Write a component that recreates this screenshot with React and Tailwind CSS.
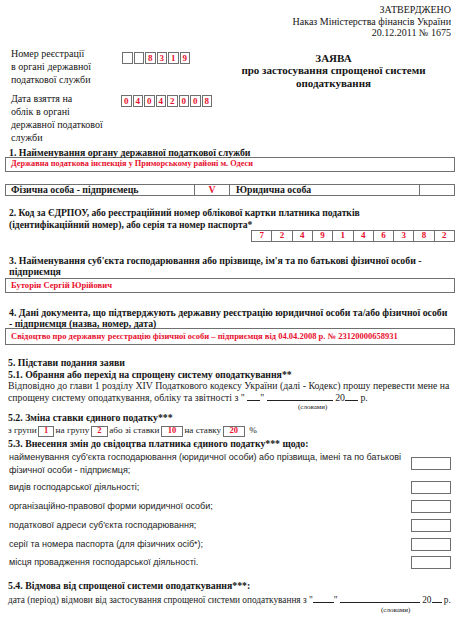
import React from "react";

const red = "text-[#e8102e]";

function DigitBoxes({ values }) {
  return (
    <div className="flex gap-[1px]">
      {values.map((v, i) => (
        <div
          key={i}
          className={`w-[10.5px] h-[12px] border border-[#6f6f6f] flex items-center justify-center text-[9px] font-bold leading-none ${red}`}
        >
          {v}
        </div>
      ))}
    </div>
  );
}

function Blank({ w, thick }) {
  return (
    <span
      className={`inline-block align-baseline ${w} ${thick ? "border-b-[1.5px]" : "border-b"} border-[#222] h-[8px]`}
    />
  );
}

function ItemRow({ children, h }) {
  return (
    <div className={`flex items-center justify-between ${h}`}>
      <div className="[font-family:'Liberation_Sans',sans-serif] text-[9px] leading-[13px] text-[#222] w-[395px]">
        {children}
      </div>
      <div className="w-[40px] h-[13px] border border-[#6f6f6f] mr-[4px] shrink-0" />
    </div>
  );
}

function NumBox({ w, children }) {
  return (
    <span className={`mx-[1.5px] ${w} h-[11px] border border-[#6f6f6f] flex items-center justify-center font-bold text-[8.5px] ${red}`}>
      {children}
    </span>
  );
}

export default function App() {
  const code = ["7", "2", "4", "9", "1", "4", "6", "3", "8", "2"];
  return (
    <div className="w-[474px] h-[618px] overflow-hidden bg-white text-[#151515] [font-family:'Liberation_Serif',serif] pl-[9px] pr-[19px]">
      {/* Header */}
      <div className="pt-[4px] pr-[4px] text-right text-[10px] leading-[11.5px]">
        <div>ЗАТВЕРДЖЕНО</div>
        <div>Наказ Міністерства фінансів України</div>
        <div>20.12.2011 № 1675</div>
      </div>

      {/* Top block */}
      <div className="flex mt-[8px]">
        <div className="w-[203px] shrink-0">
          <div className="flex">
            <div className="w-[113px] pl-[2px] text-[10px] leading-[13px]">
              <div>Номер реєстрації</div>
              <div>в органі державної</div>
              <div>податкової служби</div>
            </div>
            <div className="mt-[5.5px]">
              <DigitBoxes values={["", "", "8", "3", "1", "9"]} />
            </div>
          </div>
          <div className="flex mt-[6px]">
            <div className="w-[113px] pl-[2px] text-[10px] leading-[13px]">
              <div>Дата взяття на</div>
              <div>облік в органі</div>
              <div>державної податкової</div>
              <div>служби</div>
            </div>
            <div className="mt-[3.5px]">
              <DigitBoxes values={["0", "4", "0", "4", "2", "0", "0", "8"]} />
            </div>
          </div>
        </div>
        <div className="flex-1 text-center font-bold text-[11px] leading-[12.5px] pt-[5px]">
          <div>ЗАЯВА</div>
          <div>про застосування спрощеної системи</div>
          <div>оподаткування</div>
        </div>
      </div>

      {/* Section 1 */}
      <div className="mt-[4.5px] font-bold text-[9.8px] leading-[10px] whitespace-nowrap">
        1. Найменування органу державної податкової служби
      </div>
      <div className={`-ml-[4px] mt-[-1px] h-[15px] border border-[#707070] pl-[5px] flex items-center font-bold text-[8.3px] ${red}`}>
        Державна податкова інспекція у Приморському районі м. Одеси
      </div>

      {/* Person type row */}
      <div className="-ml-[4px] mt-[12px] h-[12px] flex border border-[#707070] font-bold text-[9.8px]">
        <div className="w-[189px] pl-[5px] flex items-center border-r border-[#707070]">
          Фізична особа - підприємець
        </div>
        <div className={`w-[35px] flex items-center justify-center border-r border-[#707070] ${red}`}>
          V
        </div>
        <div className="w-[190px] pl-[6px] flex items-center border-r border-[#707070]">
          Юридична особа
        </div>
        <div className="flex-1" />
      </div>

      {/* Section 2 */}
      <div className="mt-[11px] font-bold text-[9.6px] leading-[12px] whitespace-nowrap">
        <div>2. Код за ЄДРПОУ, або реєстраційний номер облікової картки платника податків</div>
        <div>(ідентифікаційний номер), або серія та номер паспорта*</div>
      </div>
      <div className="flex justify-end mt-[-1px]">
        <div className="flex border-l border-[#707070]">
          {code.map((d, i) => (
            <div
              key={i}
              className={`w-[20.3px] h-[12px] border-y border-r border-[#707070] flex items-center justify-center font-bold text-[9px] ${red}`}
            >
              {d}
            </div>
          ))}
        </div>
      </div>

      {/* Section 3 */}
      <div className="mt-[12.5px] font-bold text-[9.8px] leading-[11px] whitespace-nowrap">
        <div>3. Найменування суб'єкта господарювання або прізвище, ім'я та по батькові фізичної особи -</div>
        <div>підприємця</div>
      </div>
      <div className={`-ml-[4px] mt-[1.5px] h-[15px] border border-[#707070] pl-[5px] flex items-center font-bold text-[8.6px] ${red}`}>
        Буторін Сергій Юрійович
      </div>

      {/* Section 4 */}
      <div className="mt-[13.5px] font-bold text-[9.8px] leading-[11px] whitespace-nowrap">
        <div>4. Дані документа, що підтверджують державну реєстрацію юридичної особи та/або фізичної особи</div>
        <div>- підприємця (назва, номер, дата)</div>
      </div>
      <div className={`-ml-[4px] mt-[-0.5px] h-[17px] border border-[#707070] pl-[5px] flex items-center font-bold text-[8.5px] whitespace-nowrap ${red}`}>
        Свідоцтво про державну реєстрацію фізичної особи – підприємця від 04.04.2008 р. № 23120000658931
      </div>

      {/* Section 5 */}
      <div className="mt-[12px] -ml-[1px] text-[9.8px] leading-[11.5px]">
        <div className="font-bold text-[9.8px]">5. Підстави подання заяви</div>
        <div className="font-bold text-[9.8px]">5.1. Обрання або перехід на спрощену систему оподаткування**</div>
        <div className="text-[#222] whitespace-nowrap">
          Відповідно до глави 1 розділу XIV Податкового кодексу України (далі - Кодекс) прошу перевести мене на
        </div>
        <div className="text-[#222] whitespace-nowrap">
          спрощену систему оподаткування, обліку та звітності з "{" "}
          <Blank w="w-[13px]" thick />" <Blank w="w-[22px]" />
          <Blank w="w-[40px]" thick />
          <Blank w="w-[4px]" /> 20<Blank w="w-[13px]" thick /> р.
        </div>
        <div className="text-[7px] leading-[9px] pl-[290px]">(словами)</div>
        <div className="font-bold text-[9.8px] leading-[12px]">5.2. Зміна ставки єдиного податку***</div>
        <div className="h-[14px] flex items-center text-[9.2px] text-[#222] whitespace-nowrap">
          <span>з групи</span>
          <NumBox w="w-[16px]">1</NumBox>
          <span>на групу</span>
          <NumBox w="w-[17px]">2</NumBox>
          <span>або зі ставки</span>
          <NumBox w="w-[22px]">10</NumBox>
          <span>на ставку</span>
          <NumBox w="w-[22px]">20</NumBox>
          <span className="ml-[3px]">%</span>
        </div>
        <div className="font-bold text-[9.8px] leading-[12px] whitespace-nowrap">
          5.3. Внесення змін до свідоцтва платника єдиного податку*** щодо:
        </div>
      </div>

      {/* 5.3 items */}
      <div className="mt-[0.5px]">
        <ItemRow h="h-[26px]">
          <div>найменування суб'єкта господарювання (юридичної особи) або прізвища, імені та по батькові</div>
          <div>фізичної особи - підприємця;</div>
        </ItemRow>
        <div className="mt-[2px]" />
        <ItemRow h="h-[18.75px]">видів господарської діяльності;</ItemRow>
        <ItemRow h="h-[18.75px]">організаційно-правової форми юридичної особи;</ItemRow>
        <ItemRow h="h-[18.75px]">податкової адреси суб'єкта господарювання;</ItemRow>
        <ItemRow h="h-[18.75px]">серії та номера паспорта (для фізичних осіб*);</ItemRow>
        <ItemRow h="h-[18.75px]">місця провадження господарської діяльності.</ItemRow>
      </div>

      {/* 5.4 */}
      <div className="mt-[7.5px] -ml-[1px] font-bold text-[9.8px] leading-[12px]">
        5.4. Відмова від спрощеної системи оподаткування***:
      </div>
      <div className="mt-[2px] -ml-[1px] text-[9.3px] leading-[12px] text-[#222] whitespace-nowrap">
        дата (період) відмови від застосування спрощеної системи оподаткування з "
        <Blank w="w-[21px]" />" <Blank w="w-[80px]" /> 20<Blank w="w-[10px]" /> р.
      </div>
      <div className="text-[7px] leading-[8px] pl-[372px]">(словами)</div>
    </div>
  );
}
